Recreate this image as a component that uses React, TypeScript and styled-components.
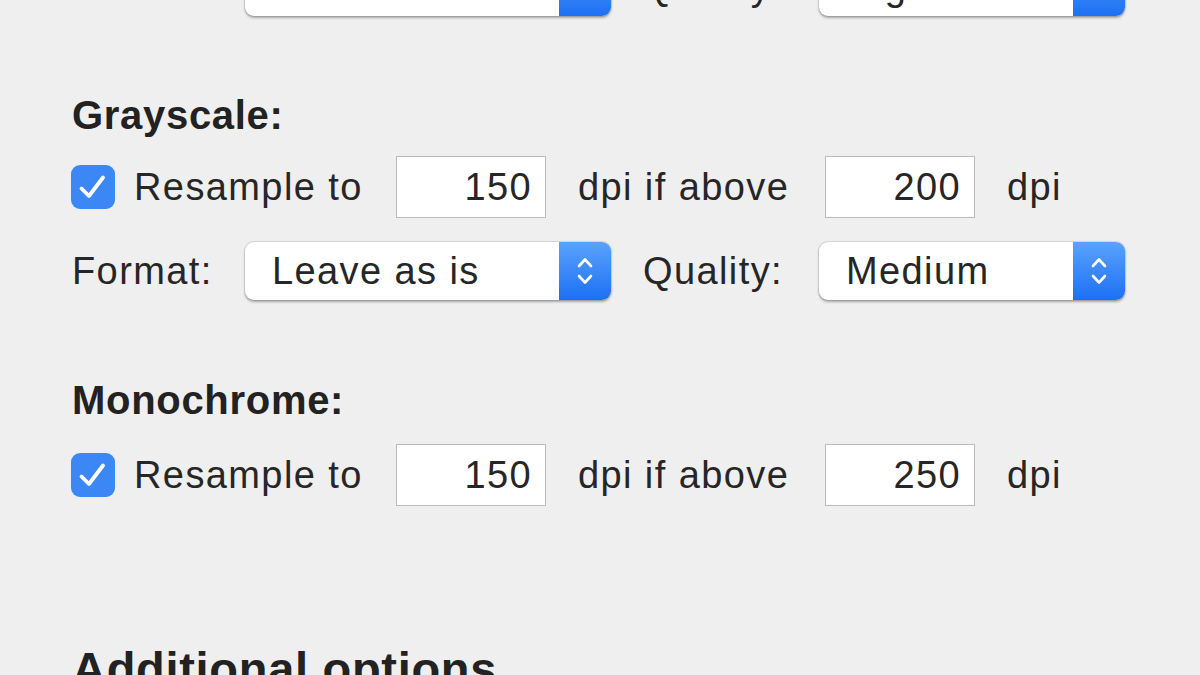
import React from 'react'
import styled, { createGlobalStyle } from 'styled-components'

const GlobalStyle = createGlobalStyle`
  html, body {
    margin: 0;
    padding: 0;
    background: #efefef;
    overflow: hidden;
  }
  body {
    font-family: "Liberation Sans", Arial, sans-serif;
    color: #262626;
  }
`

const Page = styled.div`
  width: 1200px;
  height: 675px;
  overflow: hidden;
  padding-left: 72px;
  box-sizing: border-box;
`

const Panel = styled.div`
  display: flex;
  flex-direction: column;
  margin-top: -42px;
`

interface GapProps {
  top: number
}

const Heading = styled.h2<GapProps & { size?: number }>`
  margin: ${p => p.top}px 0 0 0;
  font-size: ${p => p.size || 40}px;
  line-height: ${p => (p.size || 40) + 8}px;
  font-weight: 700;
  letter-spacing: 0.7px;
  color: #222;
`

const Row = styled.div<GapProps>`
  display: flex;
  align-items: center;
  margin-top: ${p => p.top}px;
`

interface LabelProps {
  width?: number
  pad?: number
}

const Label = styled.span<LabelProps>`
  flex: none;
  width: ${p => (p.width ? p.width + 'px' : 'auto')};
  padding-left: ${p => p.pad || 0}px;
  font-size: 38px;
  letter-spacing: 1.4px;
  white-space: nowrap;
  box-sizing: border-box;
`

const Check = styled.span`
  flex: none;
  width: 44px;
  height: 44px;
  margin-left: -1px;
  margin-right: 19px;
  border-radius: 9px;
  background: #3b87f6;
  display: flex;
  align-items: center;
  justify-content: center;
`

const NumberBox = styled.div`
  flex: none;
  width: 150px;
  height: 62px;
  box-sizing: border-box;
  background: #fff;
  border: 1.5px solid #bcbcbc;
  display: flex;
  align-items: center;
  justify-content: flex-end;
  padding-right: 13px;
  font-size: 38px;
  letter-spacing: 1.4px;
`

const Select = styled.div<{ width: number }>`
  flex: none;
  width: ${p => p.width}px;
  height: 58px;
  box-sizing: border-box;
  background: #fff;
  border-radius: 9px;
  box-shadow: 0 0 0 1px rgba(0, 0, 0, 0.08), 0 1.5px 2.5px rgba(0, 0, 0, 0.3);
  display: flex;
  align-items: stretch;
  overflow: hidden;
`

const SelectText = styled.span`
  flex: 1;
  display: flex;
  align-items: center;
  padding-left: 27px;
  font-size: 38px;
  letter-spacing: 1.4px;
  white-space: nowrap;
`

const Stepper = styled.span`
  flex: none;
  width: 52px;
  background: linear-gradient(#5aa3fb, #1d6ff5);
  display: flex;
  align-items: center;
  justify-content: center;
`

const CheckIcon = () => (
  <svg width="44" height="44" viewBox="0 0 44 44">
    <path d="M10.5 23.5 L18 31 L32 12.5" fill="none" stroke="#fff" strokeWidth="3.8" strokeLinecap="round" strokeLinejoin="round" />
  </svg>
)

const Chevrons = () => (
  <svg width="22" height="36" viewBox="0 0 22 36">
    <path d="M5 13 L11 6.5 L17 13" fill="none" stroke="#fff" strokeWidth="2.6" strokeLinecap="round" strokeLinejoin="round" />
    <path d="M5 23 L11 29.5 L17 23" fill="none" stroke="#fff" strokeWidth="2.6" strokeLinecap="round" strokeLinejoin="round" />
  </svg>
)

const PopUp: React.FC<{ width: number; value: string }> = ({ width, value }) => (
  <Select width={width}>
    <SelectText>{value}</SelectText>
    <Stepper>
      <Chevrons />
    </Stepper>
  </Select>
)

const FormatRow: React.FC<{ top: number; quality: string }> = ({ top, quality }) => (
  <Row top={top}>
    <Label width={173}>Format:</Label>
    <PopUp width={366} value="Leave as is" />
    <Label width={208} pad={32}>Quality:</Label>
    <PopUp width={306} value={quality} />
  </Row>
)

const ResampleRow: React.FC<{ top: number; to: string; above: string }> = ({ top, to, above }) => (
  <Row top={top}>
    <Check>
      <CheckIcon />
    </Check>
    <Label width={262}>Resample to</Label>
    <NumberBox>{to}</NumberBox>
    <Label width={279} pad={32}>dpi if above</Label>
    <NumberBox>{above}</NumberBox>
    <Label pad={32}>dpi</Label>
  </Row>
)

export default function App() {
  return (
    <Page>
      <GlobalStyle />
      <Panel>
        <FormatRow top={0} quality="Highest" />
        <Heading top={75}>Grayscale:</Heading>
        <ResampleRow top={17} to="150" above="200" />
        <FormatRow top={24} quality="Medium" />
        <Heading top={76}>Monochrome:</Heading>
        <ResampleRow top={20} to="150" above="250" />
        <Heading top={135} size={47}>Additional options</Heading>
      </Panel>
    </Page>
  )
}
